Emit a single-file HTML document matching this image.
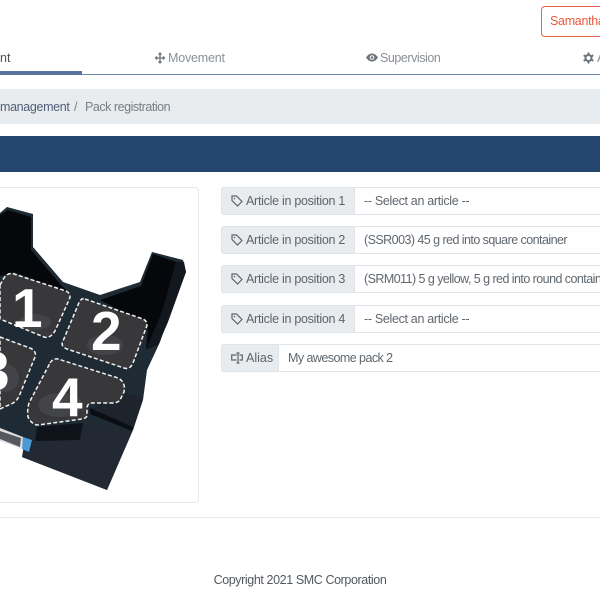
<!DOCTYPE html>
<html><head><meta charset="utf-8"><style>
*{box-sizing:border-box}
html,body{margin:0;padding:0;width:600px;height:600px;overflow:hidden;background:#fff}
body{position:relative;font-family:"Liberation Sans",sans-serif;font-size:12px;color:#495057}
.a{position:absolute;white-space:nowrap}
.bar{position:absolute;left:0;width:600px}
.nav{top:50px;line-height:16px;color:#8a9097;font-size:12.500px}
.nav svg{position:absolute;top:2px}
.grp{position:absolute;left:221px;width:379px;height:28px;border:1px solid #e0e4e8;border-right:none;border-radius:3px 0 0 3px;background:#fff}
.pre{position:absolute;left:-1px;top:-1px;height:28px;background:#e9ecef;border:1px solid #e0e4e8;border-radius:3px 0 0 3px;line-height:27px;padding-left:24px;color:#5b646c;font-size:12.500px;letter-spacing:-.28px;white-space:nowrap}
.pre svg{position:absolute;left:9px;top:7px}
.val{position:absolute;top:0;right:0;overflow:hidden;line-height:27px;white-space:nowrap;color:#5f676e;font-size:12.500px;letter-spacing:-.32px}
.val.t{letter-spacing:-.55px}
</style></head><body>

<div class="a" style="left:541px;top:6px;width:59px;height:31px;border:1px solid #e8614a;border-right:none;border-radius:4px 0 0 4px;color:#e8593f;line-height:29px;padding-left:8px;font-size:12.500px;letter-spacing:-.3px;overflow:hidden">Samantha</div>

<div class="a nav" style="left:0;color:#4b5259">nt</div>
<div class="a nav" style="left:155px;padding-left:13px;letter-spacing:-.2px"><svg style="left:0" width="10" height="12" viewBox="0 0 10 12"><path d="M5 1v10M0.500 6h9M3.500 2.500L5 1l1.500 1.500M3.500 9.500L5 11l1.500-1.500M2 4.500L0.500 6 2 7.500M8 4.500L9.500 6 8 7.500" fill="none" stroke="#6d747b" stroke-width="1.300"/></svg>Movement</div>
<div class="a nav" style="left:366px;padding-left:14px;letter-spacing:-.45px"><svg style="left:0;top:3px" width="12" height="9" viewBox="0 0 12 9"><path d="M0 4.500C2 1.500 4 .5 6 .5s4 1 6 4c-2 3-4 4-6 4s-4-1-6-4z" fill="#6d747b"/><circle cx="6" cy="4.500" r="2.300" fill="#fff"/><circle cx="6" cy="4.500" r="1.300" fill="#6d747b"/></svg>Supervision</div>
<div class="a nav" style="left:583px;width:17px;overflow:hidden;padding-left:14px"><svg style="left:0;top:2px" width="11" height="12" viewBox="0 0 11 12"><circle cx="5.500" cy="6" r="3" fill="none" stroke="#6d747b" stroke-width="2"/><path d="M5.500 .5v2.500M5.500 9v2.500M.7 3.200l2.200 1.300M8.100 7.500l2.200 1.300M.7 8.800l2.200-1.300M8.100 4.500l2.200-1.300" stroke="#6d747b" stroke-width="2"/></svg>Administration</div>

<div class="bar" style="top:74px;height:1px;background:#6d87ad"></div>
<div class="a" style="left:0;top:71px;width:82px;height:4px;background:#56729f"></div>

<div class="bar" style="top:89px;height:35px;background:#e9ecef"></div>
<div class="a" style="left:0;top:99px;line-height:16px;font-size:12.500px;letter-spacing:-.35px;color:#4f5f78">management</div>
<div class="a" style="left:74px;top:99px;line-height:16px;font-size:12.500px;color:#767e86">/</div>
<div class="a" style="left:85px;top:99px;line-height:16px;font-size:12.500px;letter-spacing:-.47px;color:#767e86">Pack registration</div>

<div class="bar" style="top:136px;height:36px;background:#24476f"></div>

<div class="a" style="left:0;top:187px;width:199px;height:316px;border:1px solid #e9e9e9;border-left:none;border-radius:0 4px 4px 0;background:#fff"></div>

<svg class="a" style="left:0;top:180px" width="198" height="320" viewBox="0 180 198 320">
<path d="M0 213L7 207L33 214L33 247L63 282L100 295L140 282L152 252L183 260L186 272L170 313L160 342L147 370L143 400L133 430L107 490L22 457L24 445L0 436z" fill="#1e2a34"/>
<path d="M0 215L8 210L31 217L31 250L61 285L70 294L14 272L0 276z" fill="#05070a"/>
<path d="M100 300L141 286L153 254L176 262L162 312L146 350L148 325z" fill="#05070a"/>
<path d="M176 262L184 262L186 272L168 322L158 345L146 350L162 312z" fill="#12181e"/>
<path d="M124 392L143 398L133 430L90 410z" fill="#1d242c"/>
<path d="M35 441L80 440L86 420L132 432L107 490L22 457z" fill="#232932"/>
<path d="M37 427L83 423L80 440L35 441z" fill="#0e1319"/>
<path d="M90 408L133 427L132 431L90 414z" fill="#0b0f14"/>
<path d="M0 428L23 437L22 449L0 441z" fill="#e0e0e0"/>
<path d="M0 431L21 438L20 447L0 439z" fill="#55595f"/>
<path d="M23 437L32 440L29 452L22 449z" fill="#4a9ad8"/>
<g fill="#38383a" stroke="#f2f2f2" stroke-width="1.500" stroke-dasharray="4 2.200" stroke-linejoin="round">
<path d="M0 285L4 278Q8 272 14 274L66 291Q72 294 69 300L55 331Q50 339 44 337L0 319z"/>
<path d="M85 299L143 319Q149 322 146 328L133 363Q130 370 124 368L67 349Q60 346 63 341L78 305Q81 297 85 299z"/>
<path d="M0 337L30 348Q37 351 35 357L20 394Q17 402 11 404L0 409z"/>
<path d="M50 363Q53 358 58 359L118 378Q126 382 124 392L120 400Q118 403 112 403L92 403Q87 403 87 409L87 415Q87 418 82 419L38 425Q32 425 28 417Q27 410 29 403z"/>
</g>
<g fill="#4d4f52" opacity=".55">
<ellipse cx="35" cy="322" rx="16" ry="8"/>
<ellipse cx="105" cy="345" rx="18" ry="10"/>
<ellipse cx="60" cy="405" rx="22" ry="12"/>
<ellipse cx="5" cy="378" rx="14" ry="14"/>
</g>
<g font-family="'Liberation Sans',sans-serif" font-weight="700" font-size="55" fill="#fff">
<text x="12" y="327">1</text>
<text x="91" y="350">2</text>
<text x="-21" y="390">3</text>
<text x="52" y="416">4</text>
</g>
</svg>

<div class="grp" style="top:187px"><div class="pre" style="width:134px"><svg width="12" height="12" viewBox="0 0 12 12"><path d="M1 1h4.500L11 6.500 6.500 11 1 5.500z" fill="none" stroke="#5b646c" stroke-width="1.200"/><circle cx="3.500" cy="3.500" r=".8" fill="#5b646c"/></svg>Article in position 1</div><div class="val" style="left:142px">-- Select an article --</div></div>
<div class="grp" style="top:226px"><div class="pre" style="width:134px"><svg width="12" height="12" viewBox="0 0 12 12"><path d="M1 1h4.500L11 6.500 6.500 11 1 5.500z" fill="none" stroke="#5b646c" stroke-width="1.200"/><circle cx="3.500" cy="3.500" r=".8" fill="#5b646c"/></svg>Article in position 2</div><div class="val t" style="left:142px">(SSR003) 45 g red into square container</div></div>
<div class="grp" style="top:265px"><div class="pre" style="width:134px"><svg width="12" height="12" viewBox="0 0 12 12"><path d="M1 1h4.500L11 6.500 6.500 11 1 5.500z" fill="none" stroke="#5b646c" stroke-width="1.200"/><circle cx="3.500" cy="3.500" r=".8" fill="#5b646c"/></svg>Article in position 3</div><div class="val t" style="left:142px">(SRM011) 5 g yellow, 5 g red into round container</div></div>
<div class="grp" style="top:305px"><div class="pre" style="width:134px"><svg width="12" height="12" viewBox="0 0 12 12"><path d="M1 1h4.500L11 6.500 6.500 11 1 5.500z" fill="none" stroke="#5b646c" stroke-width="1.200"/><circle cx="3.500" cy="3.500" r=".8" fill="#5b646c"/></svg>Article in position 4</div><div class="val" style="left:142px">-- Select an article --</div></div>
<div class="grp" style="top:344px"><div class="pre" style="width:58px;letter-spacing:0"><svg width="12" height="12" viewBox="0 0 12 12"><path d="M5.500 3H.7v5h4.800M8.500 3H11.300v5H8.500M7 1v10M5.500 1h3M5.500 11h3" fill="none" stroke="#5b646c" stroke-width="1.200"/></svg>Alias</div><div class="val t" style="left:66px">My awesome pack 2</div></div>

<div class="bar" style="top:517px;height:1px;background:#e8e8e8"></div>
<div class="a" style="left:0;top:572px;width:600px;text-align:center;line-height:16px;font-size:12.500px;letter-spacing:-.4px;color:#53595f">Copyright 2021 SMC Corporation</div>
</body></html>
